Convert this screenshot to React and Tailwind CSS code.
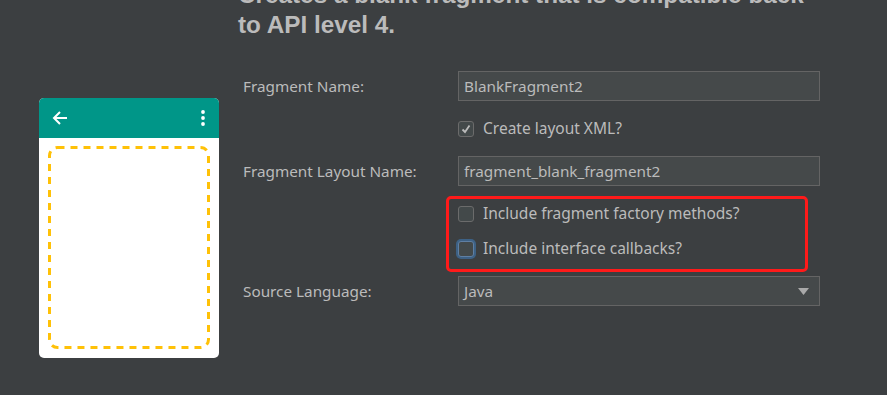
import React from "react";

function Checkbox({ checked, focused }) {
  return (
    <div
      className={
        "w-[16px] h-[16px] rounded-[3px] bg-[#43494a] flex items-center justify-center shrink-0 " +
        (focused
          ? "border-[1px] border-[#5f7fa3] shadow-[0_0_0_2px_#3d6185]"
          : "border border-[#6b6b6b]")
      }
    >
      {checked && (
        <svg width="12" height="12" viewBox="0 0 12 12">
          <path d="M2.5 6.5 L5 9 L9.5 2.5" fill="none" stroke="#bbbbbb" strokeWidth="1.8" />
        </svg>
      )}
    </div>
  );
}

function Input({ value, dropdown }) {
  return (
    <div className="w-[362px] h-[30px] bg-[#45494a] border border-[#646464] flex items-center pl-[5px] pr-[10px] text-[#bbbbbb] text-[15.3px]">
      <span className="flex-1">{value}</span>
      {dropdown && (
        <svg width="11" height="7" viewBox="0 0 11 7">
          <path d="M0 0 H11 L5.5 7 Z" fill="#a9a9a9" />
        </svg>
      )}
    </div>
  );
}

export default function App() {
  return (
    <div
      className="w-[887px] h-[395px] bg-[#3c3f41] overflow-hidden text-[#bbbbbb] text-[15.3px]"
      style={{ fontFamily: '"Noto Sans", "Open Sans", sans-serif' }}
    >
      <div
        className="ml-[238px] mt-[-20px] text-[24.3px] leading-[30px] font-bold text-[#bbbbbb]"
        style={{ fontFamily: '"Liberation Sans", Arial, sans-serif' }}
      >
        <div className="whitespace-nowrap">Creates a blank fragment that is compatible back</div>
        <div>to API level 4.</div>
      </div>

      <div className="flex mt-[31px]">
        {/* phone preview */}
        <div className="ml-[39px] mt-[27px] w-[180px] h-[260px] bg-white rounded-[5px] overflow-hidden flex flex-col shrink-0">
          <div className="h-[40px] bg-[#009688] flex items-center justify-between pl-[13px] pr-[14px]">
            <svg width="16" height="16" viewBox="0 0 16 16">
              <path d="M15 8 H2 M8 2 L2 8 L8 14" fill="none" stroke="white" strokeWidth="2" />
            </svg>
            <svg width="4" height="16" viewBox="0 0 4 16">
              <circle cx="2" cy="2" r="1.9" fill="white" />
              <circle cx="2" cy="8" r="1.9" fill="white" />
              <circle cx="2" cy="14" r="1.9" fill="white" />
            </svg>
          </div>
          <div className="flex-1 pl-[9px] pt-[8px]">
            <svg width="162" height="203" viewBox="0 0 162 203">
              <rect
                x="1.5"
                y="1.5"
                width="159"
                height="200"
                rx="8"
                fill="none"
                stroke="#ffc107"
                strokeWidth="3"
                strokeDasharray="7 6"
              />
            </svg>
          </div>
        </div>

        {/* form */}
        <div className="ml-[24px] flex flex-col">
          <div className="flex items-center h-[30px]">
            <span className="w-[215px]">Fragment Name:</span>
            <Input value="BlankFragment2" />
          </div>
          <div className="flex items-center h-[55px] pl-[215px]">
            <Checkbox checked />
            <span className="ml-[9px] text-[15.5px]">Create layout XML?</span>
          </div>
          <div className="flex items-center h-[30px]">
            <span className="w-[215px]">Fragment Layout Name:</span>
            <Input value="fragment_blank_fragment2" />
          </div>
          <div className="relative h-[90px] pl-[215px] pt-[18px] flex flex-col gap-[15px]">
            <div className="flex items-center h-[20px]">
              <Checkbox />
              <span className="ml-[9px] text-[15.5px]">Include fragment factory methods?</span>
            </div>
            <div className="flex items-center h-[20px]">
              <Checkbox focused />
              <span className="ml-[9px] text-[15.5px]">Include interface callbacks?</span>
            </div>
            <div className="absolute left-[203px] top-[10px] w-[362px] h-[76px] border-[3px] border-[#ff1a1a] rounded-[5px]" />
          </div>
          <div className="flex items-center h-[30px]">
            <span className="w-[215px]">Source Language:</span>
            <Input value="Java" dropdown />
          </div>
        </div>
      </div>
    </div>
  );
}
